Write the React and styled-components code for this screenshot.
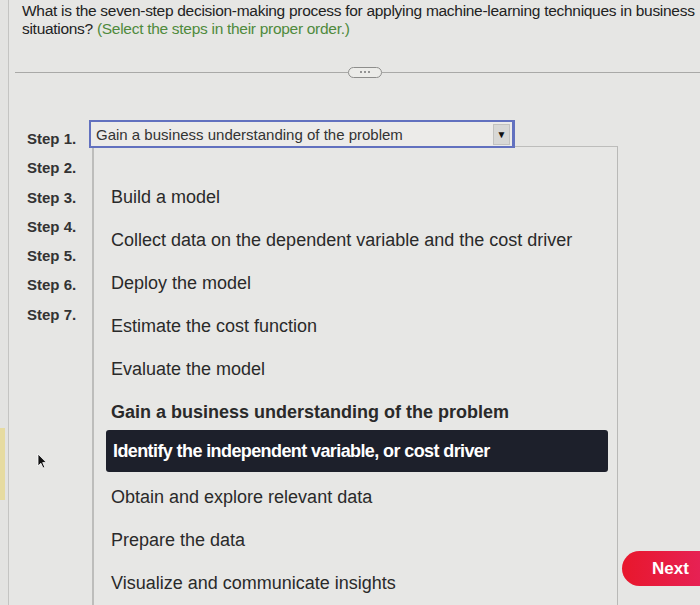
import React from "react";
import styled, { createGlobalStyle } from "styled-components";

const GlobalStyle = createGlobalStyle`
  html, body {
    margin: 0;
    padding: 0;
    background: #e5e5e3;
    font-family: "Liberation Sans", Arial, sans-serif;
    overflow: hidden;
  }
`;

const Frame = styled.div`
  position: relative;
  width: 700px;
  height: 605px;
  overflow: hidden;
  background: #e3e3e1;
`;

const Page = styled.div`
  margin-left: 8px;
  height: 605px;
  border-left: 1px solid #c4c4c2;
  background: #e6e6e4;
`;

const Question = styled.p`
  margin: 0;
  padding: 2px 0 0 13px;
  font-size: 15.5px;
  line-height: 18px;
  letter-spacing: -0.29px;
  color: #222;
  white-space: nowrap;
`;

const Hint = styled.span`
  color: #4f8a3c;
`;

const Divider = styled.div`
  display: flex;
  align-items: center;
  margin: 28px 0 0 6px;
  height: 12px;
`;

const Rule = styled.div`
  flex: ${(p) => (p.grow ? 1 : "none")};
  width: ${(p) => (p.grow ? "auto" : "333px")};
  height: 1px;
  background: #a9a9a7;
`;

const Pill = styled.div`
  width: 32px;
  height: 9px;
  border: 1px solid #8e8e8c;
  border-radius: 6px;
  display: flex;
  align-items: center;
  justify-content: center;
  gap: 2px;
  background: #ecece9;
`;

const Dot = styled.span`
  width: 2px;
  height: 2px;
  border-radius: 50%;
  background: #777;
`;

const Body = styled.div`
  display: flex;
  margin-top: 42px;
`;

const Steps = styled.ol`
  list-style: none;
  margin: 0;
  padding: 4px 0 0 18px;
  width: 62px;
`;

const StepLabel = styled.li`
  height: 29.3px;
  line-height: 29.3px;
  font-size: 15px;
  font-weight: bold;
  color: #333;
`;

const Column = styled.div`
  display: flex;
  flex-direction: column;
`;

const Select = styled.div`
  box-sizing: border-box;
  width: 426px;
  height: 28px;
  border: 2px solid #6271bf;
  border-right-width: 3px;
  background: #ecebe9;
  display: flex;
  align-items: center;
  justify-content: space-between;
  padding: 0 2px 0 5px;
  font-size: 15px;
  color: #333;
  position: relative;
  z-index: 1;
`;

const Arrow = styled.span`
  width: 15px;
  height: 19px;
  background: #d8d8d6;
  border: 1px solid #c2c2c0;
  display: flex;
  align-items: center;
  justify-content: center;
  font-size: 10px;
  color: #111;
`;

const Listbox = styled.ul`
  list-style: none;
  margin: -2px 0 0 3px;
  padding: 29px 9px 0 12px;
  width: 502px;
  border-left: 2px solid #bdbdbb;
  border-right: 1px solid #b9b9b7;
  border-top: 1px solid #bdbdbb;
  background: #e7e7e5;
  height: 470px;
`;

const Option = styled.li`
  display: flex;
  align-items: center;
  padding-left: ${(p) => (p.active ? "7px" : "5px")};
  margin: ${(p) => (p.active ? "-4px 0 4px" : "0")};
  height: ${(p) => (p.active ? "42px" : "43px")};
  border-radius: 3px;
  background: ${(p) => (p.active ? "#1d202b" : "transparent")};
  color: ${(p) => (p.active ? "#fff" : "#2a2a2a")};
  font-size: 18px;
  font-weight: ${(p) => (p.bold || p.active ? "bold" : "normal")};
  letter-spacing: ${(p) => (p.active ? "-0.6px" : "0")};
`;

const Cursor = styled.svg`
  position: absolute;
  left: 37px;
  top: 453px;
`;

const YellowMark = styled.div`
  position: absolute;
  left: 0;
  top: 428px;
  width: 5px;
  height: 72px;
  background: #e6dba0;
`;

const NextButton = styled.button`
  position: absolute;
  left: 622px;
  top: 551px;
  width: 100px;
  height: 35px;
  border: none;
  border-radius: 18px;
  background: linear-gradient(90deg, #e8172c, #e6245f);
  color: #fff;
  font-family: "Liberation Sans", Arial, sans-serif;
  font-size: 17px;
  font-weight: bold;
  text-align: left;
  padding-left: 30px;
`;

const steps = ["Step 1.", "Step 2.", "Step 3.", "Step 4.", "Step 5.", "Step 6.", "Step 7."];

const options = [
  { text: "Build a model" },
  { text: "Collect data on the dependent variable and the cost driver" },
  { text: "Deploy the model" },
  { text: "Estimate the cost function" },
  { text: "Evaluate the model" },
  { text: "Gain a business understanding of the problem", bold: true },
  { text: "Identify the independent variable, or cost driver", active: true },
  { text: "Obtain and explore relevant data" },
  { text: "Prepare the data" },
  { text: "Visualize and communicate insights" },
];

export default function App() {
  return (
    <>
      <GlobalStyle />
      <Frame>
        <Page>
          <Question>
            What is the seven-step decision-making process for applying machine-learning techniques in business
            <br />
            situations? <Hint>(Select the steps in their proper order.)</Hint>
          </Question>
          <Divider>
            <Rule />
            <Pill>
              <Dot />
              <Dot />
              <Dot />
            </Pill>
            <Rule grow />
          </Divider>
          <Body>
            <Steps>
              {steps.map((s) => (
                <StepLabel key={s}>{s}</StepLabel>
              ))}
            </Steps>
            <Column>
              <Select>
                Gain a business understanding of the problem
                <Arrow>▼</Arrow>
              </Select>
              <Listbox>
                {options.map((o) => (
                  <Option key={o.text} bold={o.bold} active={o.active}>
                    {o.text}
                  </Option>
                ))}
              </Listbox>
            </Column>
          </Body>
        </Page>
        <YellowMark />
        <Cursor width="10" height="16" viewBox="0 0 10 16">
          <path d="M1 1 L1 13 L3.9 10.3 L6 15 L7.8 14.2 L5.7 9.6 L9.4 9.6 Z" fill="#111" stroke="#fff" strokeWidth="0.8" />
        </Cursor>
        <NextButton>Next</NextButton>
      </Frame>
    </>
  );
}
